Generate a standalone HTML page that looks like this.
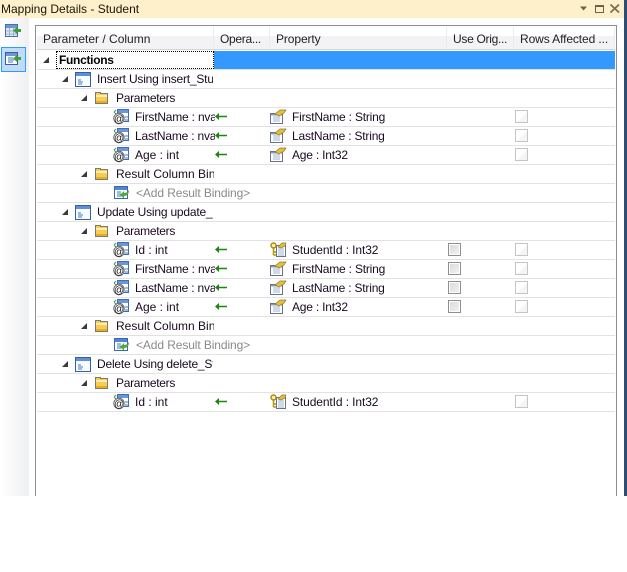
<!DOCTYPE html>
<html>
<head>
<meta charset="utf-8">
<style>
html,body{margin:0;padding:0;background:#fff}
body{width:627px;height:572px;position:relative;overflow:hidden;font:12px "Liberation Sans",sans-serif;color:#111}
.a{position:absolute}
.t{position:absolute;white-space:nowrap;overflow:hidden;height:16px;line-height:16px;color:#1a0a20;letter-spacing:-.2px}
.h{position:absolute;top:31px;height:16px;line-height:16px;white-space:nowrap;color:#222}
.l{position:absolute;left:37px;width:578px;height:1px;background:#e2e2e2}
.s{position:absolute;top:27px;width:1px;height:22px;background:#ececee}
svg{position:absolute;overflow:visible}
.c{position:absolute;width:11px;height:11px;border:1px solid #c4c4c4;background:linear-gradient(135deg,#fff 55%,#f5f5f5 56%)}
.eo{position:absolute;width:11px;height:11px;border:1px solid #8f8f8f;background:#fff}
.e{position:absolute;left:1px;top:1px;width:9px;height:9px;background:linear-gradient(135deg,#dcdcdc,#f0f0f0)}
</style>
</head>
<body>
<svg width="0" height="0" style="position:absolute">
<defs>
<g id="tri"><path d="M0 6L6 0V6Z" fill="#3a3a3a"/></g>
<g id="folder"><path d="M.5 2.500V1.500H5.500V2.500H12.500V12.500H.5Z" fill="#f6cd52" stroke="#7d7a6c"/><path d="M1 4H12V6H1Z" fill="#fdeeb4"/><path d="M1 10H12V12H1Z" fill="#e6ae20"/></g>
<g id="tbl"><rect x=".5" y=".5" width="15" height="14" fill="#f8fbff" stroke="#34609f"/><rect x="1" y="1" width="14" height="3" fill="#5f8fd6"/><path d="M3 8H6M3 10H8M3 12H7" stroke="#3a78c8" fill="none"/></g>
<g id="param"><path d="M1 3L3 1M1 3L3 5" stroke="#4a9a4a" fill="none"/><rect x="4.500" y=".5" width="11" height="12" fill="#fff" stroke="#3f6cb4"/><rect x="5" y="1" width="10" height="3" fill="#6b97d8"/><path d="M12 8H15M12 11H15" stroke="#3a78c8"/><circle cx="6" cy="9.500" r="5.200" fill="#fff" stroke="#666"/><text x="6" y="13" font-family="Liberation Sans,sans-serif" font-size="10" font-style="italic" text-anchor="middle" fill="#111">@</text></g>
<g id="prop"><rect x=".5" y="4.500" width="12" height="10" fill="#fff" stroke="#6a7386"/><rect x="1" y="5" width="11" height="1.500" fill="#8d9cb4"/><path d="M3 8H10M3 10H10M3 12H10" stroke="#9db4d6"/><path d="M5 5L10 1H16L14 4L9 7Z" fill="#e8bd38" stroke="#8a7a30" stroke-width=".7"/></g>
<g id="key"><rect x="6.500" y="3.500" width="9" height="11" fill="#fff" stroke="#6a7386"/><path d="M8 7H14M8 9H14M8 11H14M8 13H14" stroke="#9db4d6"/><path d="M8 5L12 1H16L15 4L11 6Z" fill="#e8bd38" stroke="#8a7a30" stroke-width=".7"/><circle cx="3.500" cy="3.500" r="2.500" fill="#fff2a8" stroke="#a88a10" stroke-width="1.400"/><path d="M3.500 6V13M3.500 10H6M3.500 13H6" stroke="#b8920c" stroke-width="1.500" fill="none"/></g>
<g id="arr"><path d="M0 3.500L4 0V2.800H12V4.200H4V7Z" fill="#1f8410"/></g>
<g id="add"><rect x=".5" y=".5" width="13" height="12" fill="#fff" stroke="#3a66ae"/><rect x="1" y="1" width="12" height="3" fill="#4f86d8"/><path d="M3 6H7M3 8H7M3 10H7" stroke="#3a78c8"/><path d="M6 9L10 5L10 7C13 7 14 5 15 4C15 8 13 10 10 10V12.500Z" fill="#4aaa3c"/></g>
<g id="tb1"><rect x=".5" y=".5" width="12" height="12" fill="#dfe8f4" stroke="#4a6fa8"/><rect x="1" y="1" width="11" height="3" fill="#6b97d8"/><path d="M1 7H12M1 10H12M4.500 4V12M8.500 4V12" stroke="#9fb4d2"/><path d="M8 6.500L12 3V5H16V8H12V10Z" fill="#3fa034"/></g>
<g id="tb2"><rect x=".5" y=".5" width="12" height="12" fill="#fff" stroke="#3f5f96"/><rect x="1" y="1" width="11" height="3" fill="#6b97d8"/><path d="M3 6H8M3 8H9M3 10H8" stroke="#3a78c8"/><path d="M8 6.500L12 3V5H16V8H12V10Z" fill="#3fa034"/></g>
</defs>
</svg>

<div class="a" style="left:0;top:0;width:624px;height:18px;background:#fdf0cb"></div>
<div class="a" style="left:624px;top:0;width:3px;height:496px;background:#2f4d74"></div>
<div class="a" style="left:1px;top:1px;font-size:12px;height:16px;line-height:16px;color:#1c1407;white-space:nowrap">Mapping Details - Student</div>
<svg style="left:580px;top:4px" width="40" height="10">
<path d="M0 2.500H7L3.500 6.500Z" fill="#6f6146"/>
<rect x="15.500" y="1.500" width="8" height="7" fill="none" stroke="#6f6146"/><rect x="15" y="1" width="9" height="2" fill="#6f6146"/>
<path d="M30.500 .5L39 8.500M39 .5L30.500 8.500" stroke="#7c6e50" stroke-width="1.800"/>
</svg>

<div class="a" style="left:0;top:18px;width:29px;height:478px;background:linear-gradient(90deg,#fff,#eff0f2)"></div>
<svg style="left:5px;top:24px" width="16" height="13"><use href="#tb1"/></svg>
<div class="a" style="left:1px;top:47px;width:23px;height:23px;border:1px solid #3399ff;background:#c1dcf8"></div>
<svg style="left:5px;top:52px" width="16" height="13"><use href="#tb2"/></svg>

<div class="a" style="left:35px;top:25px;width:580px;height:470px;border:1px solid #8e8e94;border-bottom:0"></div>
<div class="a" style="left:37px;top:26px;width:578px;height:10px;background:#fff"></div>
<div class="a" style="left:37px;top:36px;width:578px;height:13px;background:#f3f3f5"></div>
<div class="a" style="left:37px;top:49px;width:578px;height:1px;background:#d5d5d7"></div>
<div class="s" style="left:213px"></div><div class="s" style="left:269px"></div><div class="s" style="left:446px"></div><div class="s" style="left:513px"></div><div class="s" style="left:614px"></div>
<div class="h" style="left:43px">Parameter / Column</div>
<div class="h" style="left:220px;letter-spacing:-.3px">Opera...</div>
<div class="h" style="left:276px;letter-spacing:-.1px">Property</div>
<div class="h" style="left:453px;letter-spacing:-.3px">Use Orig...</div>
<div class="h" style="left:520px;letter-spacing:-.1px">Rows Affected ...</div>

<div class="a" style="left:214px;top:51px;width:401px;height:18px;background:#3399ff"></div>
<div class="a" style="left:56px;top:51px;width:156px;height:16px;border:1px dotted #000"></div>

<div class="l" style="top:69px"></div><div class="l" style="top:88px"></div><div class="l" style="top:107px"></div><div class="l" style="top:126px"></div><div class="l" style="top:145px"></div><div class="l" style="top:164px"></div><div class="l" style="top:183px"></div><div class="l" style="top:202px"></div><div class="l" style="top:221px"></div><div class="l" style="top:240px"></div><div class="l" style="top:259px"></div><div class="l" style="top:278px"></div><div class="l" style="top:297px"></div><div class="l" style="top:316px"></div><div class="l" style="top:335px"></div><div class="l" style="top:354px"></div><div class="l" style="top:373px"></div><div class="l" style="top:392px"></div><div class="l" style="top:411px"></div>

<!-- Functions -->
<svg style="left:43px;top:57px" width="7" height="7"><use href="#tri"/></svg>
<div class="t" style="left:59px;top:52px;width:150px;font-weight:bold;color:#000;letter-spacing:-.3px">Functions</div>

<!-- Insert -->
<svg style="left:62px;top:76px" width="7" height="7"><use href="#tri"/></svg>
<svg style="left:75px;top:72px" width="16" height="15"><use href="#tbl"/></svg>
<div class="t" style="left:97px;top:71px;width:116px">Insert Using insert_Stu</div>
<svg style="left:81px;top:95px" width="7" height="7"><use href="#tri"/></svg>
<svg style="left:95px;top:91px" width="13" height="13"><use href="#folder"/></svg>
<div class="t" style="left:116px;top:90px;letter-spacing:-.3px">Parameters</div>

<svg style="left:113px;top:109px" width="16" height="15"><use href="#param"/></svg>
<div class="t" style="left:135px;top:109px;width:80px">FirstName : nvarchar</div>
<svg style="left:215px;top:113px" width="13" height="7"><use href="#arr"/></svg>
<svg style="left:270px;top:109px" width="16" height="15"><use href="#prop"/></svg>
<div class="t" style="left:292px;top:109px">FirstName : String</div>
<div class="c" style="left:515px;top:110px"></div>

<svg style="left:113px;top:128px" width="16" height="15"><use href="#param"/></svg>
<div class="t" style="left:135px;top:128px;width:80px">LastName : nvarchar</div>
<svg style="left:215px;top:132px" width="13" height="7"><use href="#arr"/></svg>
<svg style="left:270px;top:128px" width="16" height="15"><use href="#prop"/></svg>
<div class="t" style="left:292px;top:128px">LastName : String</div>
<div class="c" style="left:515px;top:129px"></div>

<svg style="left:113px;top:147px" width="16" height="15"><use href="#param"/></svg>
<div class="t" style="left:135px;top:147px;width:80px;letter-spacing:0">Age : int</div>
<svg style="left:215px;top:151px" width="13" height="7"><use href="#arr"/></svg>
<svg style="left:270px;top:147px" width="16" height="15"><use href="#prop"/></svg>
<div class="t" style="left:292px;top:147px">Age : Int32</div>
<div class="c" style="left:515px;top:148px"></div>

<svg style="left:81px;top:171px" width="7" height="7"><use href="#tri"/></svg>
<svg style="left:95px;top:167px" width="13" height="13"><use href="#folder"/></svg>
<div class="t" style="left:116px;top:166px;width:98px;letter-spacing:0">Result Column Bin</div>
<svg style="left:114px;top:186px" width="15" height="13"><use href="#add"/></svg>
<div class="t" style="left:136px;top:185px;color:#8a8a8a;letter-spacing:-.1px">&lt;Add Result Binding&gt;</div>

<!-- Update -->
<svg style="left:62px;top:209px" width="7" height="7"><use href="#tri"/></svg>
<svg style="left:75px;top:205px" width="16" height="15"><use href="#tbl"/></svg>
<div class="t" style="left:97px;top:204px;width:116px">Update Using update_Student</div>
<svg style="left:81px;top:228px" width="7" height="7"><use href="#tri"/></svg>
<svg style="left:95px;top:224px" width="13" height="13"><use href="#folder"/></svg>
<div class="t" style="left:116px;top:223px;letter-spacing:-.3px">Parameters</div>

<svg style="left:113px;top:242px" width="16" height="15"><use href="#param"/></svg>
<div class="t" style="left:135px;top:242px;width:80px;letter-spacing:0">Id : int</div>
<svg style="left:215px;top:246px" width="13" height="7"><use href="#arr"/></svg>
<svg style="left:270px;top:242px" width="16" height="15"><use href="#key"/></svg>
<div class="t" style="left:292px;top:242px;letter-spacing:-.1px">StudentId : Int32</div>
<div class="eo" style="left:448px;top:243px"><div class="e"></div></div>
<div class="c" style="left:515px;top:243px"></div>

<svg style="left:113px;top:261px" width="16" height="15"><use href="#param"/></svg>
<div class="t" style="left:135px;top:261px;width:80px">FirstName : nvarchar</div>
<svg style="left:215px;top:265px" width="13" height="7"><use href="#arr"/></svg>
<svg style="left:270px;top:261px" width="16" height="15"><use href="#prop"/></svg>
<div class="t" style="left:292px;top:261px">FirstName : String</div>
<div class="eo" style="left:448px;top:262px"><div class="e"></div></div>
<div class="c" style="left:515px;top:262px"></div>

<svg style="left:113px;top:280px" width="16" height="15"><use href="#param"/></svg>
<div class="t" style="left:135px;top:280px;width:80px">LastName : nvarchar</div>
<svg style="left:215px;top:284px" width="13" height="7"><use href="#arr"/></svg>
<svg style="left:270px;top:280px" width="16" height="15"><use href="#prop"/></svg>
<div class="t" style="left:292px;top:280px">LastName : String</div>
<div class="eo" style="left:448px;top:281px"><div class="e"></div></div>
<div class="c" style="left:515px;top:281px"></div>

<svg style="left:113px;top:299px" width="16" height="15"><use href="#param"/></svg>
<div class="t" style="left:135px;top:299px;width:80px;letter-spacing:0">Age : int</div>
<svg style="left:215px;top:303px" width="13" height="7"><use href="#arr"/></svg>
<svg style="left:270px;top:299px" width="16" height="15"><use href="#prop"/></svg>
<div class="t" style="left:292px;top:299px">Age : Int32</div>
<div class="eo" style="left:448px;top:300px"><div class="e"></div></div>
<div class="c" style="left:515px;top:300px"></div>

<svg style="left:81px;top:323px" width="7" height="7"><use href="#tri"/></svg>
<svg style="left:95px;top:319px" width="13" height="13"><use href="#folder"/></svg>
<div class="t" style="left:116px;top:318px;width:98px;letter-spacing:0">Result Column Bin</div>
<svg style="left:114px;top:338px" width="15" height="13"><use href="#add"/></svg>
<div class="t" style="left:136px;top:337px;color:#8a8a8a;letter-spacing:-.1px">&lt;Add Result Binding&gt;</div>

<!-- Delete -->
<svg style="left:62px;top:361px" width="7" height="7"><use href="#tri"/></svg>
<svg style="left:75px;top:357px" width="16" height="15"><use href="#tbl"/></svg>
<div class="t" style="left:97px;top:356px;width:116px">Delete Using delete_St</div>
<svg style="left:81px;top:380px" width="7" height="7"><use href="#tri"/></svg>
<svg style="left:95px;top:376px" width="13" height="13"><use href="#folder"/></svg>
<div class="t" style="left:116px;top:375px;letter-spacing:-.3px">Parameters</div>

<svg style="left:113px;top:394px" width="16" height="15"><use href="#param"/></svg>
<div class="t" style="left:135px;top:394px;width:80px;letter-spacing:0">Id : int</div>
<svg style="left:215px;top:398px" width="13" height="7"><use href="#arr"/></svg>
<svg style="left:270px;top:394px" width="16" height="15"><use href="#key"/></svg>
<div class="t" style="left:292px;top:394px;letter-spacing:-.1px">StudentId : Int32</div>
<div class="c" style="left:515px;top:395px"></div>
</body>
</html>
